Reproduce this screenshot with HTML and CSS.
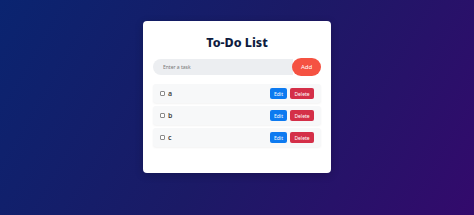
FILE: index.html
```html
<!DOCTYPE html>
<html lang="en">
    <head>
        <meta charset="UTF-8">
        <meta name="viewport" content="width=device-width, initial-scale=1.0">
        <title>To-Do List</title>
        <link rel="stylesheet" href="styles.css">
    </head>
    <body>
        <div class="container">
            <h1>To-Do List</h1>
            <div class="input-row">
                <input type="text" id="taskInput" placeholder="Enter a task">
                <button class="add-btn">Add</button>
            </div>
            <ul class="task-list">
                <li class="task">
                    <input type="checkbox">
                    <span class="task-text">a</span>
                    <button class="edit-btn">Edit</button>
                    <button class="delete-btn">Delete</button>
                </li>
                <li class="task">
                    <input type="checkbox">
                    <span class="task-text">b</span>
                    <button class="edit-btn">Edit</button>
                    <button class="delete-btn">Delete</button>
                </li>
                <li class="task">
                    <input type="checkbox">
                    <span class="task-text">c</span>
                    <button class="edit-btn">Edit</button>
                    <button class="delete-btn">Delete</button>
                </li>
            </ul>
        </div>
    </body>
</html>
```

FILE: styles.css
```css
body {
    font-family: "Noto Sans", "Open Sans", sans-serif;
    margin: 0;
    height: 215px;
    padding-top: 21px;
    box-sizing: border-box;
    background: linear-gradient(120deg, #0a2470 0%, #1b1a66 50%, #330a6c 100%);
}

.container {
    width: 188px;
    margin: 0 auto;
    padding: 12px 10px 26px;
    box-sizing: border-box;
    background-color: #fff;
    border-radius: 4px;
    box-shadow: 0 2px 8px rgba(0, 0, 0, 0.2);
}

h1 {
    margin: 0 0 5px;
    font-size: 12.5px;
    line-height: 20px;
    font-weight: 800;
    text-align: center;
    color: #0e1c40;
}

.input-row {
    display: flex;
    align-items: center;
    height: 18px;
}

.input-row input {
    flex: 1;
    height: 16px;
    padding: 0 0 0 10px;
    border: none;
    border-radius: 8px 0 0 8px;
    background-color: #eceef1;
    font-family: inherit;
    font-size: 5px;
    outline: none;
}

.input-row input::placeholder {
    color: #777;
}

.add-btn {
    width: 29px;
    height: 18px;
    margin-left: -1px;
    padding: 0;
    border: none;
    border-radius: 9px;
    background-color: #f55242;
    color: #fff;
    font-family: inherit;
    font-size: 6px;
}

.task-list {
    list-style: none;
    margin: 8px 0 0;
    padding: 0;
    display: flex;
    flex-direction: column;
    gap: 3px;
}

.task {
    display: flex;
    align-items: center;
    height: 19px;
    padding: 0 7px;
    background-color: #f7f8f9;
    border-radius: 3px;
    box-shadow: 0 1px 2px rgba(0, 0, 0, 0.05);
}

.task input[type="checkbox"] {
    appearance: none;
    width: 5px;
    height: 5px;
    margin: 0 3px 0 0;
    border: 1px solid #8a8a8a;
    border-radius: 1px;
    background-color: #fff;
}

.task-text {
    flex: 1;
    font-size: 7px;
    font-weight: 600;
    color: #444;
}

.task button {
    height: 11px;
    padding: 0;
    border: none;
    border-radius: 2px;
    color: #fff;
    font-family: inherit;
    font-size: 5px;
}

.edit-btn {
    width: 17px;
    background-color: #0d7af0;
}

.delete-btn {
    width: 24px;
    margin-left: 3px;
    background-color: #d42f48;
}
```
